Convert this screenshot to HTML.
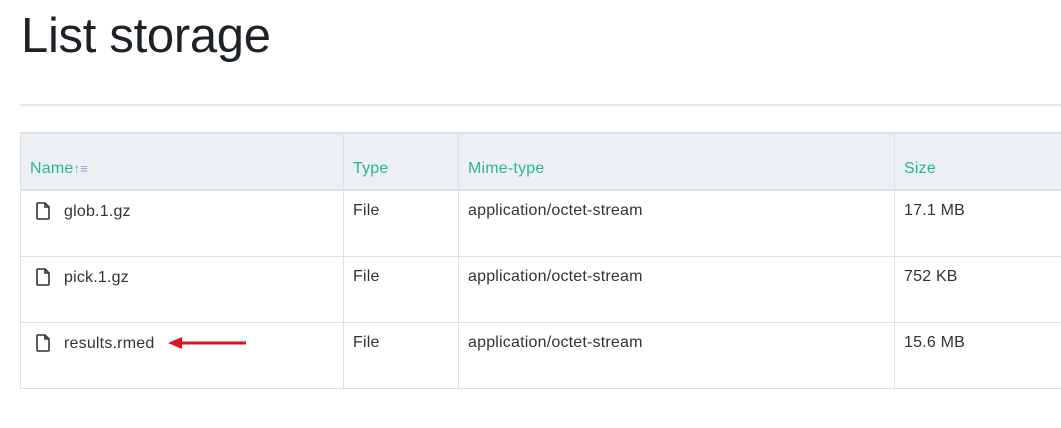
<!DOCTYPE html>
<html><head><style>
body{margin:0;background:#fff;width:1061px;height:428px;overflow:hidden;font-family:"Liberation Sans",sans-serif;}
h1{position:absolute;left:21px;top:8px;margin:0;font-weight:normal;font-size:49px;color:#1d2228;letter-spacing:-0.3px}
.hr{position:absolute;left:20px;top:104px;width:1041px;height:2px;background:#e6e8ea}
table{position:absolute;left:20px;top:132px;border-collapse:collapse;width:1060px;font-size:16px;letter-spacing:0.2px;color:#333}
td,th{border:1px solid #dde1e4;text-align:left;vertical-align:top;padding:0 9px;font-weight:normal}
th{background:#edf0f2;color:#2bb596;height:57px;vertical-align:middle;padding-top:14px;box-sizing:border-box;border-width:2px 1px 2px 1px}
td{height:66px;padding-top:11px;box-sizing:border-box}
.ic{display:inline-block;vertical-align:-4px;margin:0 14px 0 6px}
</style></head><body>
<h1>List storage</h1>
<div class="hr"></div>
<table>
<tr><th style="width:323px">Name<span style="font-size:13px;color:#8ac">↑&#8801;</span></th><th style="width:115px">Type</th><th style="width:436px">Mime-type</th><th>Size</th></tr>
<tr><td><svg class="ic" width="14" height="18" viewBox="0 0 14 18"><path d="M2 1h7l4 4v11a1 1 0 0 1-1 1H2a1 1 0 0 1-1-1V2a1 1 0 0 1 1-1z M9 1v4h4" fill="none" stroke="#333" stroke-width="1.6"/></svg>glob.1.gz</td><td>File</td><td>application/octet-stream</td><td>17.1 MB</td></tr>
<tr><td><svg class="ic" width="14" height="18" viewBox="0 0 14 18"><path d="M2 1h7l4 4v11a1 1 0 0 1-1 1H2a1 1 0 0 1-1-1V2a1 1 0 0 1 1-1z M9 1v4h4" fill="none" stroke="#333" stroke-width="1.6"/></svg>pick.1.gz</td><td>File</td><td>application/octet-stream</td><td>752 KB</td></tr>
<tr><td><svg class="ic" width="14" height="18" viewBox="0 0 14 18"><path d="M2 1h7l4 4v11a1 1 0 0 1-1 1H2a1 1 0 0 1-1-1V2a1 1 0 0 1 1-1z M9 1v4h4" fill="none" stroke="#333" stroke-width="1.6"/></svg>results.rmed<svg style="vertical-align:-1px;margin-left:14px" width="80" height="12" viewBox="0 0 80 12"><path d="M12 6H78" stroke="#e5101a" stroke-width="3"/><path d="M0 6L14 0V12Z" fill="#e5101a"/></svg></td><td>File</td><td>application/octet-stream</td><td>15.6 MB</td></tr>
</table>
</body></html>
